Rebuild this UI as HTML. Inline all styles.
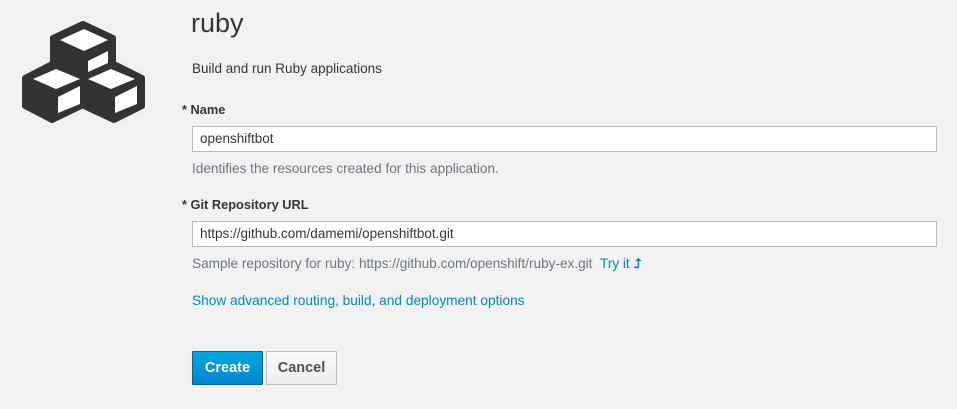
<!DOCTYPE html>
<html><head><style>
body{margin:0;width:957px;height:409px;background:#f1f1f1;font-family:"Liberation Sans",sans-serif;position:relative;overflow:hidden;color:#363636}
.a{position:absolute;white-space:nowrap}
.inp{position:absolute;left:192px;width:745px;height:26px;background:#fff;border:1px solid #bbb;box-sizing:border-box;font-size:13.5px;line-height:24px;padding-left:7px;color:#363636}
.help{color:#72767b;font-size:13.6px}
.lbl{font-size:12.8px;font-weight:bold;left:182px}
.btn{position:absolute;top:351px;height:34px;box-sizing:border-box;font-size:14.5px;font-weight:bold;text-align:center;line-height:32px;border-radius:1px}
</style></head><body>
<svg class="a" style="left:0;top:0" width="170" height="130" viewBox="0 0 170 130">
<g fill="#333" stroke="#333" stroke-width="6" stroke-linejoin="round">
<polygon points="83,24 113,38 113,66 83,80 53,66 53,38"/>
<polygon points="52,64 81,78 81,106 52,120 25,106 25,78"/>
<polygon points="114,64 142,78 142,106 114,120 84,106 84,78"/>
</g>
<g fill="#fff">
<polygon points="84,29 108,40 84,51 60,40"/>
<polygon points="88,61 108,51 108,63 88,72"/>
<polygon points="56,69 80,79 56,89 33,79"/>
<polygon points="58,97 80,86 80,104 58,113"/>
<polygon points="111,69 135,79 111,89 88,79"/>
<polygon points="115,97 137,86 137,104 115,113"/>
</g>
</svg>
<div class="a" style="left:191px;top:8px;font-size:27px;color:#363636">ruby</div>
<div class="a" style="left:192px;top:61px;font-size:13.5px">Build and run Ruby applications</div>
<div class="a lbl" style="top:102px">* Name</div>
<div class="inp" style="top:126px">openshiftbot</div>
<div class="a help" style="left:192px;top:161px">Identifies the resources created for this application.</div>
<div class="a lbl" style="top:197px">* Git Repository URL</div>
<div class="inp" style="top:221px">https://github.com/damemi/openshiftbot.git</div>
<div class="a help" style="left:192px;top:256px">Sample repository for ruby: https://github.com/openshift/ruby-ex.git &nbsp;<span style="color:#0088ce">Try it <b>⮥</b></span></div>
<div class="a" style="left:192px;top:293px;font-size:13.7px;color:#0088ce">Show advanced routing, build, and deployment options</div>
<div class="btn" style="left:192px;width:71px;background:linear-gradient(#00a8e1,#0085cf);border:1px solid #00659c;color:#fff">Create</div>
<div class="btn" style="left:266px;width:71px;background:linear-gradient(#fafafa,#ededed);border:1px solid #bbb;color:#4d5258">Cancel</div>
</body></html>
